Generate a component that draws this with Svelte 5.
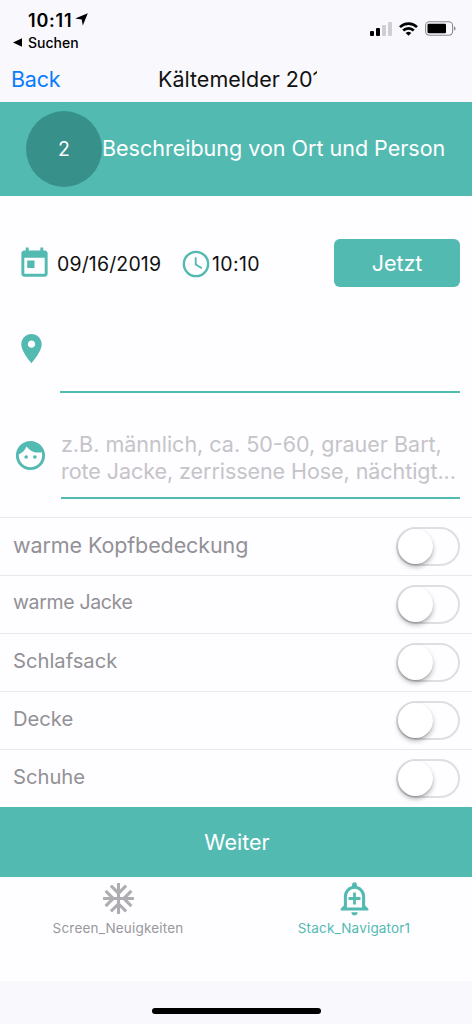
<script lang="ts">
  let date = "09/16/2019";
  let time = "10:10";
  let place = "";

  const items = [
    { label: "warme Kopfbedeckung", size: "large" },
    { label: "warme Jacke", size: "small" },
    { label: "Schlafsack", size: "medium" },
    { label: "Decke", size: "medium" },
    { label: "Schuhe", size: "medium" },
  ];
</script>

<div class="screen">
  <header>
    <div class="status">
      <div class="status-left">
        <div class="clock">
          <span>10:11</span>
          <svg width="13" height="13" viewBox="0 0 13 13"><path d="M12.8.2 7.8 12.6 6.7 6.5.2 5.600z" /></svg>
        </div>
        <div class="return">
          <svg width="9" height="9" viewBox="0 0 9 9"><path d="M0 4.5 9 .3v8.4z" /></svg>
          <span>Suchen</span>
        </div>
      </div>
      <div class="status-right">
        <svg width="22" height="14" viewBox="0 0 22 14">
          <rect x="0" y="9" width="4" height="5" rx="1" />
          <rect x="6" y="6" width="4" height="8" rx="1" />
          <rect x="12" y="3" width="4" height="11" rx="1" fill="#cfced3" />
          <rect x="18" y="0" width="4" height="14" rx="1" fill="#cfced3" />
        </svg>
        <svg width="19" height="14" viewBox="0 0 19 14" fill="none" stroke="#000" stroke-width="2.7">
          <path d="M1 5.1a12.2 12.2 0 0 1 17 0" />
          <path d="M4.2 8.5a7.6 7.6 0 0 1 10.6 0" />
          <path d="M9.5 13.8 6.7 11a4 4 0 0 1 5.6 0z" fill="#000" stroke="none" />
        </svg>
        <svg width="31" height="15" viewBox="0 0 31 15">
          <rect x=".6" y=".8" width="27" height="13.4" rx="3.6" fill="none" stroke="#8d8c91" stroke-width="1.1" />
          <rect x="2.5" y="2.8" width="18.5" height="9.4" rx="1.2" />
          <path d="M29 5.2q1.6.7 1.6 2.3T29 9.8z" fill="#8d8c91" />
        </svg>
      </div>
    </div>
    <nav>
      <span class="back">Back</span>
      <span class="title">Kältemelder 2019</span>
    </nav>
  </header>

  <div class="banner">
    <div class="step">2</div>
    <h1>Beschreibung von Ort und Person</h1>
  </div>

  <div class="when">
    <svg class="teal" width="35" height="35" viewBox="0 0 24 24">
      <path d="M19 3h-1V1h-2v2H8V1H6v2H5c-1.11 0-1.99.9-1.99 2L3 19c0 1.1.89 2 2 2h14c1.1 0 2-.9 2-2V5c0-1.1-.9-2-2-2zm0 16H5V8h14v11zM7 10h5v5H7z" />
    </svg>
    <span class="date">{date}</span>
    <svg class="teal" width="32" height="32" viewBox="0 0 24 24">
      <path d="M12 2a10 10 0 1 0 0 20 10 10 0 0 0 0-20zm0 18.2a8.2 8.2 0 1 1 0-16.4 8.2 8.2 0 0 1 0 16.4zM12.5 7h-1.4v5.7l4.9 3.1.8-1.2-4.3-2.6z" />
    </svg>
    <span class="time">{time}</span>
    <button class="now">Jetzt</button>
  </div>

  <div class="field place">
    <svg class="teal" width="35" height="35" viewBox="0 0 24 24">
      <path d="M12 2C8.13 2 5 5.13 5 9c0 5.25 7 13 7 13s7-7.75 7-13c0-3.87-3.13-7-7-7zm0 9.5c-1.38 0-2.5-1.12-2.5-2.5s1.12-2.5 2.5-2.5 2.5 1.12 2.5 2.5-1.12 2.5-2.5 2.5z" />
    </svg>
    <div class="input">{place}</div>
  </div>

  <div class="field person">
    <svg class="teal" width="35" height="35" viewBox="0 0 24 24">
      <circle cx="9" cy="13" r="1.25" />
      <circle cx="15" cy="13" r="1.25" />
      <path d="M12 2C6.48 2 2 6.48 2 12s4.48 10 10 10 10-4.48 10-10S17.52 2 12 2zm0 18c-4.41 0-8-3.59-8-8 0-.29.02-.58.05-.86 2.36-1.05 4.23-2.98 5.21-5.37C11.07 8.33 14.05 10 17.42 10c.78 0 1.53-.09 2.25-.26.21.71.33 1.47.33 2.26 0 4.41-3.59 8-8 8z" />
    </svg>
    <div class="input">
      <span>z.B. männlich, ca. 50-60, grauer Bart,</span>
      <span class="last">rote Jacke, zerrissene Hose, nächtigt...</span>
    </div>
  </div>

  <div class="list">
    {#each items as item}
      <div class="row">
        <span class="label {item.size}">{item.label}</span>
        <span class="switch"><span class="knob"></span></span>
      </div>
    {/each}
  </div>

  <button class="next">Weiter</button>

  <footer>
    <div class="tab">
      <svg width="37" height="37" viewBox="0 0 24 24">
        <path d="M22 11h-4.17l3.24-3.24-1.41-1.42L15 11h-2V9l4.66-4.66-1.42-1.41L13 6.17V2h-2v4.17L7.76 2.93 6.34 4.34 11 9v2H9L4.34 6.34 2.93 7.76 6.17 11H2v2h4.17l-3.24 3.24 1.41 1.42L9 13h2v2l-4.66 4.66 1.42 1.41L11 17.83V22h2v-4.17l3.24 3.24 1.42-1.41L13 15v-2h2l4.66 4.66 1.41-1.42L17.83 13H22z" />
      </svg>
      <span>Screen_Neuigkeiten</span>
    </div>
    <div class="tab active">
      <svg width="37" height="37" viewBox="0 0 24 24">
        <path fill-rule="evenodd" d="M10.4 3.1a1.6 1.6 0 0 1 3.2 0v.8A6.9 6.9 0 0 1 18.9 10.6v6l2.1 2.1v1.1H3v-1.1l2.1-2.1v-6A6.9 6.9 0 0 1 10.4 3.9zM7.100 17.9h9.8v-7.3a4.9 4.9 0 0 0-9.8 0z" />
        <path d="M11.1 8.100h1.8v3h3v1.8h-3v3h-1.8v-3h-3v-1.8h3z" />
        <path d="M10 20.9h4a2 2 0 0 1-4 0z" />
      </svg>
      <span>Stack_Navigator1</span>
    </div>
  </footer>

  <div class="home"><div class="bar"></div></div>
</div>

<style>
:global(body) {
  background: #fefdff;
}

.screen {
  width: 472px;
  height: 1024px;
  display: flex;
  flex-direction: column;
  overflow: hidden;
  background: #fefdff;
  font-family: Inter, "Liberation Sans", sans-serif;
  font-size: 21.5px;
}

svg {
  display: block;
  flex: none;
}

span, h1 {
  white-space: nowrap;
}

button {
  border: 0;
  padding: 0;
  color: #fff;
  background: #53bab2;
  font: inherit;
}

.teal {
  fill: #53bab2;
}

/* Status bar and navigation */
header {
  height: 102px;
  flex: none;
  background: #f9f8fd;
}

.status {
  height: 56px;
  display: flex;
  justify-content: space-between;
}

.status-left {
  padding: 9px 0 0 13px;
}

.clock {
  display: flex;
  align-items: center;
  gap: 3px;
  height: 22px;
  padding-left: 15px;
  font-size: 18px;
  font-weight: 600;
  letter-spacing: 0.8px;
}

.clock svg {
  margin-top: -2px;
}

.return {
  display: flex;
  align-items: center;
  gap: 6px;
  height: 23px;
  font-size: 14px;
  font-weight: 500;
}

.status-right {
  display: flex;
  align-items: center;
  height: 15px;
  padding: 21px 16px 0 0;
  gap: 7px;
}

nav {
  display: flex;
  align-items: center;
  height: 46px;
}

.back {
  width: 147px;
  padding-left: 11px;
  letter-spacing: -0.2px;
  color: #0a7cff;
}

.title {
  width: 159px;
  overflow: hidden;
  color: #111;
}

/* Step banner */
.banner {
  display: flex;
  align-items: center;
  height: 94px;
  flex: none;
  padding-left: 26px;
  background: #53bab2;
  color: #fff;
}

.step {
  display: flex;
  align-items: center;
  justify-content: center;
  width: 76px;
  height: 76px;
  border-radius: 50%;
  background: #37908a;
  font-size: 19.5px;
}

h1 {
  margin: -3px 0 0;
  font-size: 21.5px;
  font-weight: 400;
}

/* Date and time */
.when {
  display: flex;
  align-items: center;
  height: 48px;
  flex: none;
  margin-top: 43px;
  padding: 0 12px 0 17px;
  font-size: 19.5px;
  letter-spacing: 0.15px;
  color: #111;
}

.when svg {
  margin-top: 1px;
}

.date {
  width: 123px;
  margin-top: 2px;
  padding-left: 5px;
}

.time {
  flex: 1;
  margin-top: 2px;
  letter-spacing: 0.35px;
}

.now {
  width: 126px;
  height: 48px;
  border-radius: 6px;
  font-size: 21.5px;
}

/* Text fields */
.field {
  display: flex;
  flex: none;
  padding-right: 12px;
}

.input {
  flex: 1;
  border-bottom: 2px solid #53bab2;
}

.place {
  height: 62px;
  margin-top: 44px;
  padding-left: 14px;
}

.place .input {
  margin-left: 11px;
}

.person {
  height: 70px;
  margin-top: 36px;
  padding-left: 13px;
}

.person svg {
  margin-top: 9px;
}

.person .input {
  margin-left: 13px;
  padding-top: 2px;
  height: 66px;
  line-height: 27px;
  color: #c5c4c9;
}

.person .input span {
  display: block;
}

.person .input .last {
  letter-spacing: -0.06px;
}

/* Switch list */
.list {
  margin-top: 18px;
}

.row {
  display: flex;
  align-items: center;
  justify-content: space-between;
  height: 58px;
  box-sizing: border-box;
  padding: 0 12px 0 13px;
  border-top: 1px solid #e8e7eb;
}

.label {
  margin-top: -5px;
  color: #929196;
}

.small {
  font-size: 19.5px;
  letter-spacing: -0.35px;
}

.medium {
  font-size: 20.2px;
}

.large {
  margin-top: -3px;
  letter-spacing: -0.1px;
}

.switch {
  width: 64px;
  height: 39px;
  box-sizing: border-box;
  border: 2px solid #dfdee2;
  border-radius: 20px;
}

.knob {
  display: block;
  width: 35px;
  height: 35px;
  border-radius: 50%;
  background: #fff;
  box-shadow: 0 3px 5px rgba(0, 0, 0, 0.28), 0 1px 1px rgba(0, 0, 0, 0.12);
}

.next {
  height: 70px;
  flex: none;
  padding-left: 2px;
}

/* Tabs */
footer {
  display: flex;
  height: 104px;
  flex: none;
}

.tab {
  display: flex;
  flex-direction: column;
  align-items: center;
  width: 236px;
  padding-top: 3px;
  font-size: 13.5px;
  letter-spacing: 0.18px;
  color: #99989d;
  fill: #aeadb2;
}

.tab span {
  margin-top: 3px;
}

.tab.active {
  color: #53bab2;
  fill: #53bab2;
}

.home {
  flex: 1;
  background: #f9f8fd;
}

.bar {
  width: 169px;
  height: 6px;
  margin: 27px 0 0 152px;
  border-radius: 3px;
  background: #000;
}
</style>
